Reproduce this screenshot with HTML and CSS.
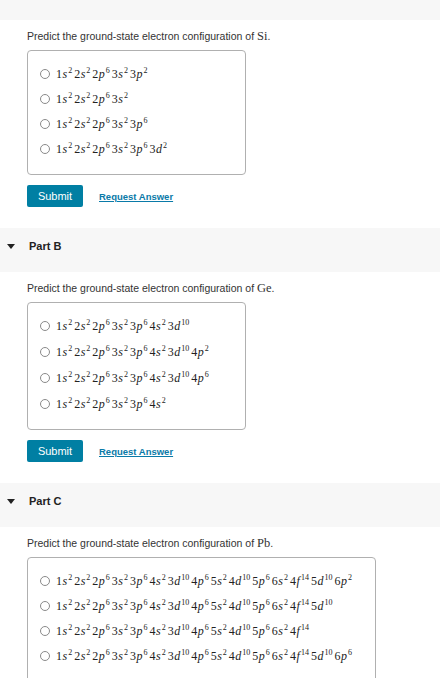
FILE: index.html
```html
<!DOCTYPE html>
<html lang="en">
<head>
<meta charset="utf-8">
<title>Electron configurations</title>
<link rel="stylesheet" href="styles.css">
</head>
<body>
<div class="band-top"></div>

<section class="part">
  <div class="content">
    <p class="prompt">Predict the ground-state electron configuration of <span class="chem">Si</span>.</p>
    <div class="choices">
      <label class="choice"><span class="radio"></span><span class="math">1<i>s</i><sup>2</sup>2<i>s</i><sup>2</sup>2<i>p</i><sup>6</sup>3<i>s</i><sup>2</sup>3<i>p</i><sup>2</sup></span></label>
      <label class="choice"><span class="radio"></span><span class="math">1<i>s</i><sup>2</sup>2<i>s</i><sup>2</sup>2<i>p</i><sup>6</sup>3<i>s</i><sup>2</sup></span></label>
      <label class="choice"><span class="radio"></span><span class="math">1<i>s</i><sup>2</sup>2<i>s</i><sup>2</sup>2<i>p</i><sup>6</sup>3<i>s</i><sup>2</sup>3<i>p</i><sup>6</sup></span></label>
      <label class="choice"><span class="radio"></span><span class="math">1<i>s</i><sup>2</sup>2<i>s</i><sup>2</sup>2<i>p</i><sup>6</sup>3<i>s</i><sup>2</sup>3<i>p</i><sup>6</sup>3<i>d</i><sup>2</sup></span></label>
    </div>
    <div class="actions"><button class="submit" type="button">Submit</button><a class="request" href="#">Request Answer</a></div>
  </div>
</section>

<section class="part">
  <div class="part-head"><span class="caret"></span><span class="part-title">Part B</span></div>
  <div class="content">
    <p class="prompt">Predict the ground-state electron configuration of <span class="chem">Ge</span>.</p>
    <div class="choices choices--tall">
      <label class="choice"><span class="radio"></span><span class="math">1<i>s</i><sup>2</sup>2<i>s</i><sup>2</sup>2<i>p</i><sup>6</sup>3<i>s</i><sup>2</sup>3<i>p</i><sup>6</sup>4<i>s</i><sup>2</sup>3<i>d</i><sup>10</sup></span></label>
      <label class="choice"><span class="radio"></span><span class="math">1<i>s</i><sup>2</sup>2<i>s</i><sup>2</sup>2<i>p</i><sup>6</sup>3<i>s</i><sup>2</sup>3<i>p</i><sup>6</sup>4<i>s</i><sup>2</sup>3<i>d</i><sup>10</sup>4<i>p</i><sup>2</sup></span></label>
      <label class="choice"><span class="radio"></span><span class="math">1<i>s</i><sup>2</sup>2<i>s</i><sup>2</sup>2<i>p</i><sup>6</sup>3<i>s</i><sup>2</sup>3<i>p</i><sup>6</sup>4<i>s</i><sup>2</sup>3<i>d</i><sup>10</sup>4<i>p</i><sup>6</sup></span></label>
      <label class="choice"><span class="radio"></span><span class="math">1<i>s</i><sup>2</sup>2<i>s</i><sup>2</sup>2<i>p</i><sup>6</sup>3<i>s</i><sup>2</sup>3<i>p</i><sup>6</sup>4<i>s</i><sup>2</sup></span></label>
    </div>
    <div class="actions"><button class="submit" type="button">Submit</button><a class="request" href="#">Request Answer</a></div>
  </div>
</section>

<section class="part">
  <div class="part-head"><span class="caret"></span><span class="part-title">Part C</span></div>
  <div class="content">
    <p class="prompt">Predict the ground-state electron configuration of <span class="chem">Pb</span>.</p>
    <div class="choices">
      <label class="choice"><span class="radio"></span><span class="math">1<i>s</i><sup>2</sup>2<i>s</i><sup>2</sup>2<i>p</i><sup>6</sup>3<i>s</i><sup>2</sup>3<i>p</i><sup>6</sup>4<i>s</i><sup>2</sup>3<i>d</i><sup>10</sup>4<i>p</i><sup>6</sup>5<i>s</i><sup>2</sup>4<i>d</i><sup>10</sup>5<i>p</i><sup>6</sup>6<i>s</i><sup>2</sup>4<i>f</i><sup>14</sup>5<i>d</i><sup>10</sup>6<i>p</i><sup>2</sup></span></label>
      <label class="choice"><span class="radio"></span><span class="math">1<i>s</i><sup>2</sup>2<i>s</i><sup>2</sup>2<i>p</i><sup>6</sup>3<i>s</i><sup>2</sup>3<i>p</i><sup>6</sup>4<i>s</i><sup>2</sup>3<i>d</i><sup>10</sup>4<i>p</i><sup>6</sup>5<i>s</i><sup>2</sup>4<i>d</i><sup>10</sup>5<i>p</i><sup>6</sup>6<i>s</i><sup>2</sup>4<i>f</i><sup>14</sup>5<i>d</i><sup>10</sup></span></label>
      <label class="choice"><span class="radio"></span><span class="math">1<i>s</i><sup>2</sup>2<i>s</i><sup>2</sup>2<i>p</i><sup>6</sup>3<i>s</i><sup>2</sup>3<i>p</i><sup>6</sup>4<i>s</i><sup>2</sup>3<i>d</i><sup>10</sup>4<i>p</i><sup>6</sup>5<i>s</i><sup>2</sup>4<i>d</i><sup>10</sup>5<i>p</i><sup>6</sup>6<i>s</i><sup>2</sup>4<i>f</i><sup>14</sup></span></label>
      <label class="choice"><span class="radio"></span><span class="math">1<i>s</i><sup>2</sup>2<i>s</i><sup>2</sup>2<i>p</i><sup>6</sup>3<i>s</i><sup>2</sup>3<i>p</i><sup>6</sup>4<i>s</i><sup>2</sup>3<i>d</i><sup>10</sup>4<i>p</i><sup>6</sup>5<i>s</i><sup>2</sup>4<i>d</i><sup>10</sup>5<i>p</i><sup>6</sup>6<i>s</i><sup>2</sup>4<i>f</i><sup>14</sup>5<i>d</i><sup>10</sup>6<i>p</i><sup>6</sup></span></label>
    </div>
  </div>
</section>
</body>
</html>
```

FILE: styles.css
```css
html, body {
  margin: 0;
  padding: 0;
  background: #ffffff;
}

body {
  font-family: "Liberation Sans", Arial, sans-serif;
  color: #333333;
  font-size: 10.5px;
}

.band-top {
  height: 20px;
  background: #f7f7f7;
}

.part-head {
  height: 44px;
  box-sizing: border-box;
  background: #f7f7f7;
  display: flex;
  align-items: flex-start;
  padding: 11px 0 0 7px;
  gap: 8px;
}

.caret {
  width: 0;
  height: 0;
  margin-top: 5px;
  border-left: 4px solid transparent;
  border-right: 4px solid transparent;
  border-top: 5px solid #222222;
}

.part-title {
  font-weight: bold;
  font-size: 11px;
  line-height: 14px;
  color: #222222;
  margin-left: 6px;
}

.content {
  padding: 9px 0 21px 27px;
}

.prompt {
  margin: 0 0 7px;
  font-size: 10.5px;
  line-height: 14px;
  color: #333333;
}

.chem {
  font-family: "Liberation Serif", "Times New Roman", serif;
  font-size: 12.5px;
}

.choices {
  display: flex;
  flex-direction: column;
  width: fit-content;
  min-width: 219px;
  box-sizing: border-box;
  border: 1px solid #b0b0b0;
  border-radius: 4px;
  padding: 10px 21px 13px 12px;
}

.choices--tall {
  padding-bottom: 12px;
}

.choice {
  display: flex;
  align-items: center;
  height: 25px;
  gap: 6px;
}

.choices--tall .choice {
  height: 26px;
}

.radio {
  flex: none;
  width: 10px;
  height: 10px;
  box-sizing: border-box;
  border: 1px solid #8a8a8a;
  border-radius: 50%;
  background: #ffffff;
}

.math {
  font-family: "Liberation Serif", "Times New Roman", serif;
  font-size: 12px;
  color: #222222;
  white-space: nowrap;
  line-height: 14px;
}

.math i {
  font-style: italic;
  margin-left: 0.5px;
}

.math sup {
  font-size: 8px;
  line-height: 0;
  vertical-align: 5px;
  margin-left: 1px;
  margin-right: 2px;
}

.actions {
  display: flex;
  align-items: center;
  gap: 16px;
  margin-top: 10px;
}

.submit {
  width: 56px;
  height: 22px;
  border: none;
  border-radius: 2px;
  background: #007fa3;
  color: #ffffff;
  font-family: "Liberation Sans", Arial, sans-serif;
  font-size: 11px;
  padding: 0;
}

.request {
  color: #0a7aa8;
  font-weight: bold;
  font-size: 9.5px;
  text-decoration: underline;
}
```
